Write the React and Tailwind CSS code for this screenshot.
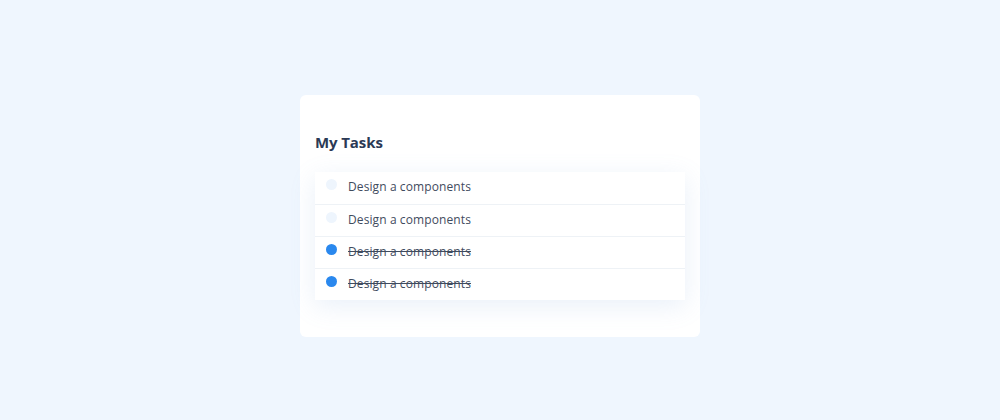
const tasks = [
  { id: 1, text: 'Design a components', done: false },
  { id: 2, text: 'Design a components', done: false },
  { id: 3, text: 'Design a components', done: true },
  { id: 4, text: 'Design a components', done: true },
];

export default function App() {
  return (
    <div className="min-h-screen bg-[#eff6fe] flex items-start justify-center pt-[95px]" style={{ fontFamily: '"Open Sans", "Liberation Sans", sans-serif' }}>
      <div className="w-[400px] h-[242px] bg-white rounded-md px-[15px] pt-[37px]">
        <h3 className="text-[15px] font-bold text-[#2b3a55] leading-5 tracking-[-0.1px]">My Tasks</h3>
        <ul className="mt-[20px] bg-white shadow-[0_6px_24px_rgba(120,160,220,0.16)]">
          {tasks.map((t, i) => (
            <li key={t.id} className={`flex items-start gap-[11px] pl-[11px] h-[32px] pt-[7px] ${i ? 'border-t border-[#eef2f6]' : ''}`}>
              <span className="w-[11px] h-[11px] rounded-full shrink-0 mt-[0px]">
                <span className={`block w-[11px] h-[11px] rounded-full ${t.done ? 'bg-[#2a88ee]' : 'bg-[#eef5fd]'}`} />
              </span>
              <span className={`text-[12px] text-[#3f4b5e] leading-4 tracking-[0.1px] ${t.done ? 'line-through' : ''}`}>{t.text}</span>
            </li>
          ))}
        </ul>
      </div>
    </div>
  );
}
